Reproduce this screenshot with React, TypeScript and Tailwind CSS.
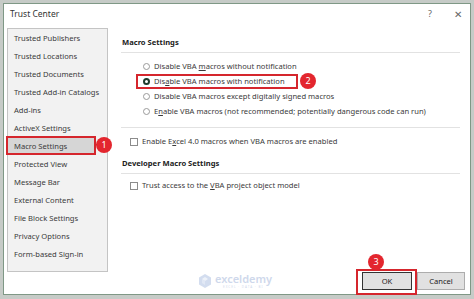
import React from "react";

const navItems = [
  "Trusted Publishers",
  "Trusted Locations",
  "Trusted Documents",
  "Trusted Add-in Catalogs",
  "Add-ins",
  "ActiveX Settings",
  "Macro Settings",
  "Protected View",
  "Message Bar",
  "External Content",
  "File Block Settings",
  "Privacy Options",
  "Form-based Sign-in",
];

function Badge({ n, className }: { n: string; className: string }) {
  return (
    <span
      className={`absolute w-[16px] h-[16px] rounded-full bg-[#e3262e] text-white text-[9px] leading-[16px] text-center ${className}`}
    >
      {n}
    </span>
  );
}

function Radio({ checked }: { checked?: boolean }) {
  return checked ? (
    <span className="w-[7px] h-[7px] rounded-full border-[2px] border-[#1e3b2c] bg-white shrink-0" />
  ) : (
    <span className="w-[7px] h-[7px] rounded-full border border-[#9a9a9a] bg-white shrink-0" />
  );
}

function Check() {
  return <span className="w-[8px] h-[8px] border border-[#8c8c8c] bg-white shrink-0" />;
}

export default function App() {
  return (
    <div
      className="w-[474px] h-[299px] bg-[#c6cbc7] pt-[3px] pl-[3px] overflow-hidden"
      style={{ fontFamily: '"Noto Sans", "Open Sans", sans-serif' }}
    >
      <div className="w-[468px] h-[292px] bg-white border border-[#7f9886] flex flex-col text-[7.6px] text-[#3a3a3a]">
        {/* title bar */}
        <div className="h-[24px] flex items-start pt-[4px] pl-[6px] pr-[8px] leading-[12px]">
          <span className="text-[8.5px] text-[#333]">Trust Center</span>
          <span className="ml-auto text-[9px] text-[#666]">?</span>
          <span className="ml-[22px] text-[10px] text-[#666] leading-[12px]">✕</span>
        </div>

        {/* body */}
        <div className="flex h-[244px]">
          <div className="ml-[3px] w-[101px] h-[244px] bg-[#f2f2f2] border border-[#c4c4c4]">
            {navItems.map((item) =>
              item === "Macro Settings" ? (
                <div key={item} className="relative h-[18px] leading-[18px] pl-[6px] bg-[#d6d6d6] w-[88px]">
                  {item}
                  <span className="absolute -left-[2px] -top-[1px] w-[90px] h-[19px] border-2 border-[#d5262d]" />
                  <span className="absolute left-[88px] top-[7px] w-[5px] h-[1px] bg-[#333]" />
                  <Badge n="1" className="left-[88px] top-0" />
                </div>
              ) : (
                <div key={item} className="h-[18px] leading-[18px] pl-[6px]">
                  {item}
                </div>
              )
            )}
          </div>

          <div className="ml-[13px] flex-1 pr-[10px]">
            <div className="mt-[7px] leading-[14px] font-bold text-[#222] pl-[1px]">Macro Settings</div>
            <div className="mt-[3px] border-t border-[#e2e2e2]" />
            <div className="pt-[6px]">
              <div className="h-[15px] flex items-center pl-[22px] gap-[4px]">
                <Radio />
                <span>
                  Disable VBA <u>m</u>acros without notification
                </span>
              </div>
              <div className="relative h-[15px] flex items-center pl-[22px] gap-[4px]">
                <Radio checked />
                <span>
                  Dis<u>a</u>ble VBA macros with notification
                </span>
                <span className="absolute left-[15px] top-0 w-[162px] h-[15px] border-2 border-[#d5262d]" />
                <Badge n="2" className="left-[179px] -top-[1px]" />
              </div>
              <div className="h-[15px] flex items-center pl-[22px] gap-[4px]">
                <Radio />
                <span>Disable VBA macros except digitally signed macros</span>
              </div>
              <div className="h-[15px] flex items-center pl-[22px] gap-[4px]">
                <Radio />
                <span>
                  E<u>n</u>able VBA macros (not recommended; potentially dangerous code can run)
                </span>
              </div>
            </div>
            <div className="mt-[8px] border-t border-[#e2e2e2]" />
            <div className="pt-[6px]">
              <div className="h-[15px] flex items-center pl-[9px] gap-[4px]">
                <Check />
                <span>
                  Enable E<u>x</u>cel 4.0 macros when VBA macros are enabled
                </span>
              </div>
            </div>
            <div className="mt-[7px] leading-[14px] font-bold text-[#222] pl-[1px]">Developer Macro Settings</div>
            <div className="mt-[3px] border-t border-[#e2e2e2]" />
            <div className="pt-[4px]">
              <div className="h-[15px] flex items-center pl-[9px] gap-[4px]">
                <Check />
                <span>
                  Trust access to the <u>V</u>BA project object model
                </span>
              </div>
            </div>
          </div>
        </div>

        {/* footer */}
        <div className="flex h-[18px] items-center pr-[5px]">
          <div className="ml-[193px] flex items-center gap-[2px] opacity-50">
            <svg width="16" height="16" viewBox="0 0 16 16">
              <polygon points="8,1 14,4.5 14,11.5 8,15 2,11.5 2,4.5" fill="#a9bde0" />
              <polygon points="8,4 11,6 8,8 5,6" fill="#dfe7f5" />
              <polygon points="5,6 8,8 8,12 5,10" fill="#c5d3ec" />
            </svg>
            <div className="flex flex-col">
              <span className="text-[11px] leading-[12px] font-semibold text-[#9fb3d9]">exceldemy</span>
              <span className="text-[3px] leading-[5px] tracking-[1px] text-[#9fb3d9] pl-[8px]">EXCEL · DATA · BI</span>
            </div>
          </div>
          <div className="ml-auto flex gap-[5px]">
            <div className="relative w-[50px] h-[18px] bg-[#e1e1e1] border border-[#333] text-center leading-[16px] text-[#222]">
              OK
              <span className="absolute -left-[7px] -top-[4px] w-[61px] h-[26px] border-2 border-[#d5262d]" />
              <Badge n="3" className="left-[5px] -top-[19px]" />
            </div>
            <div className="w-[48px] h-[18px] bg-[#e1e1e1] border border-[#adadad] text-center leading-[16px] text-[#222]">
              Cancel
            </div>
          </div>
        </div>
      </div>
    </div>
  );
}
